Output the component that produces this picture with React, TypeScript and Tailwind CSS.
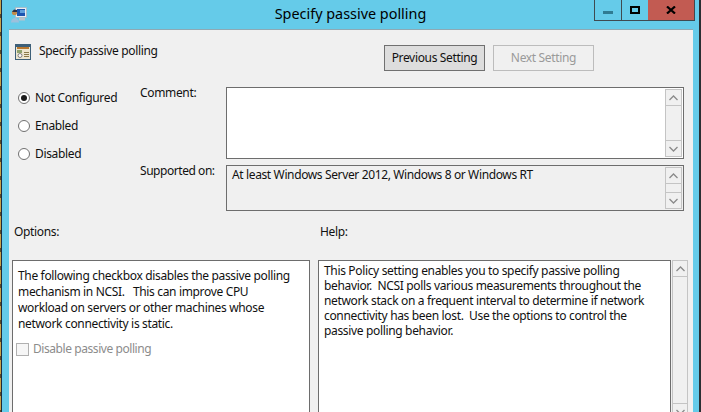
import React from 'react';

function ScrollButton({ up, className }: { up: boolean; className: string }) {
  return (
    <div className={`flex h-[16px] shrink-0 items-center justify-center border-[#c4c4c4] ${className}`}>
      <svg width="9" height="6" viewBox="0 0 9 6" fill="none" stroke="#8a8a8a" strokeWidth="1.3">
        <path d={up ? 'M0.5 5 L4.5 1 L8.5 5' : 'M0.5 1 L4.5 5 L8.5 1'} />
      </svg>
    </div>
  );
}

function ScrollBar({ className }: { className: string }) {
  return (
    <div className={`flex shrink-0 flex-col justify-between border border-[#c4c4c4] bg-[#f0f0f0] ${className}`}>
      <ScrollButton up className="border-b" />
      <ScrollButton up={false} className="border-t" />
    </div>
  );
}

function Radio({ label, checked }: { label: string; checked?: boolean }) {
  return (
    <div className="flex h-[28px] items-center gap-[5px]">
      <div className="flex h-[12px] w-[12px] items-center justify-center rounded-full border border-[#707070] bg-white">
        {checked && <div className="h-[6px] w-[6px] rounded-full bg-[#1a1a1a]" />}
      </div>
      <span>{label}</span>
    </div>
  );
}

function PolicyIcon() {
  return (
    <svg width="16" height="16" viewBox="0 0 16 16" className="shrink-0">
      <rect x="0" y="0" width="16" height="16" fill="#3d5f78" />
      <rect x="1" y="3" width="14" height="12" fill="#ece6d0" />
      <rect x="2" y="3" width="12" height="2" fill="#b9772e" />
      <rect x="2" y="6" width="5" height="3" fill="#8fa26d" />
      <circle cx="5" cy="11.5" r="2" fill="#f8f8f8" stroke="#555" strokeWidth="0.7" />
      <rect x="9" y="8" width="5" height="1" fill="#8a7a4a" />
      <rect x="9" y="10" width="5" height="1" fill="#8a7a4a" />
      <rect x="9" y="12" width="5" height="1" fill="#8a7a4a" />
    </svg>
  );
}

function AppIcon() {
  return (
    <svg width="16" height="16" viewBox="0 0 16 16" className="shrink-0">
      <rect x="4.5" y="0.5" width="11" height="10" fill="#e8eef2" stroke="#a8b8c2" strokeWidth="0.8" />
      <rect x="6" y="2" width="8" height="7" fill="#1c55b0" />
      <rect x="9" y="3" width="5" height="3" fill="#5fa0dc" />
      <rect x="8" y="11" width="6" height="2.5" fill="#b8c4cc" />
      <circle cx="3.5" cy="5.5" r="2.6" fill="#c08a4a" />
      <path d="M1 5 L3 2.5 L6 3 L6 5 L3 5 Z" fill="#27314a" />
      <path d="M0 15.5 C0 9.5 8 9.5 8 15.5 Z" fill="#9cc0dc" />
    </svg>
  );
}

export default function App() {
  return (
    <div className="flex h-[412px] w-[701px] overflow-hidden bg-[#65cbe9] font-['Noto_Sans',sans-serif] text-[12px] leading-[16px] tracking-[-0.34px] text-[#111]">
      <div className="w-[1px] shrink-0 bg-[repeating-linear-gradient(180deg,#c9a24a_0,#c9a24a_14px,#5a4a2a_14px,#5a4a2a_18px)]" />
      <div className="w-[1px] shrink-0 bg-[#1d2b3a]" />

      <div className="flex min-w-0 flex-1 flex-col">
        {/* title bar */}
        <div className="relative flex h-[29px] shrink-0 items-start justify-between pr-[4px]">
          <div className="pt-[7px] pl-[9px]">
            <AppIcon />
          </div>
          <div className="absolute inset-x-0 top-0 pt-[4px] text-center text-[14.4px] leading-[20px] tracking-normal text-black">
            Specify passive polling
          </div>
          <div className="relative flex h-[21px] border-x border-b border-[#3f4a50]">
            <div className="flex w-[27px] items-center justify-center border-r border-[#3f4a50] pt-[5px]">
              <div className="h-[3px] w-[10px] bg-[#2f7b92]" />
            </div>
            <div className="flex w-[26px] items-center justify-center">
              <div className="h-[8px] w-[10px] border-2 border-black" />
            </div>
            <div className="flex w-[46px] items-center justify-center bg-[#c25b52]">
              <svg width="10" height="8" viewBox="0 0 10 8" stroke="#000" strokeWidth="2.2">
                <path d="M1 0.5 L9 7.5 M9 0.5 L1 7.5" />
              </svg>
            </div>
          </div>
        </div>

        {/* client area */}
        <div className="mr-[6px] ml-[7px] flex min-h-0 flex-1 flex-col overflow-hidden border-t border-[#8fa9b3] bg-[#f0f0f0]">
          <div className="flex h-[54px] shrink-0">
            <div className="flex w-[375px] shrink-0 items-start gap-[8px] pt-[14px] pl-[6px]">
              <PolicyIcon />
              <span className="-mt-[1px]">Specify passive polling</span>
            </div>
            <div className="flex gap-[8px] pt-[15px]">
              <div className="flex h-[26px] w-[101px] items-center justify-center border border-[#707070] bg-[#dddddd]">
                Previous Setting
              </div>
              <div className="flex h-[26px] w-[101px] items-center justify-center border border-[#bcbcbc] bg-[#f0f0f0] text-[#9a9a9a]">
                Next Setting
              </div>
            </div>
          </div>

          <div className="flex h-[127px] shrink-0">
            <div className="w-[131px] shrink-0 pl-[9px]">
              <Radio label="Not Configured" checked />
              <Radio label="Enabled" />
              <Radio label="Disabled" />
            </div>
            <div className="flex min-w-0 flex-1 flex-col">
              <div className="flex h-[81px] shrink-0">
                <span className="w-[86px] shrink-0 pt-[1px]">Comment:</span>
                <div className="mt-[3px] flex h-[72px] w-[458px] justify-end border border-[#6d6d6d] bg-white p-[1px]">
                  <ScrollBar className="h-full w-[17px]" />
                </div>
              </div>
              <div className="flex h-[46px] shrink-0">
                <span className="-mt-[2px] w-[86px] shrink-0 tracking-[-0.45px]">Supported on:</span>
                <div className="flex h-[46px] w-[458px] justify-between border border-[#6d6d6d] bg-[#f0f0f0] p-[1px] pl-[5px]">
                  <span className="tracking-[-0.37px]">At least Windows Server 2012, Windows 8 or Windows RT</span>
                  <ScrollBar className="h-full w-[17px]" />
                </div>
              </div>
            </div>
          </div>

          <div className="flex h-[49px] shrink-0 pt-[13px] pl-[5px]">
            <span className="w-[306px]">Options:</span>
            <span>Help:</span>
          </div>

          <div className="flex min-h-0 flex-1 items-start pl-[3px]">
            <div className="h-[160px] w-[298px] shrink-0 border border-[#6d6d6d] bg-white pt-[7px] pr-[14px] pl-[5px]">
              <p>
                The following checkbox disables the passive polling mechanism in NCSI.&nbsp;&nbsp; This can improve
                CPU workload on servers or other machines whose network connectivity is static.
              </p>
              <div className="mt-[9px] -ml-[2px] flex items-center gap-[4px] text-[#8c8c8c]">
                <div className="h-[13px] w-[13px] border border-[#b0b0b0] bg-[#f6f6f6]" />
                <span className="tracking-[-0.43px]">Disable passive polling</span>
              </div>
            </div>
            <div className="ml-[8px] h-[160px] w-[353px] shrink-0 border border-[#6d6d6d] bg-white pt-[2px] pr-[5px] pl-[5px] leading-[15px]">
              <p>
                This Policy setting enables you to specify passive polling behavior.&nbsp; NCSI polls various
                measurements throughout the network stack on a frequent interval to determine if network
                connectivity has been lost.&nbsp; Use the options to control the passive polling behavior.
              </p>
            </div>
            <ScrollBar className="ml-[1px] h-[160px] w-[16px]" />
          </div>
        </div>
      </div>

      <div className="w-[2px] shrink-0 bg-[#2a2f33]" />
    </div>
  );
}
